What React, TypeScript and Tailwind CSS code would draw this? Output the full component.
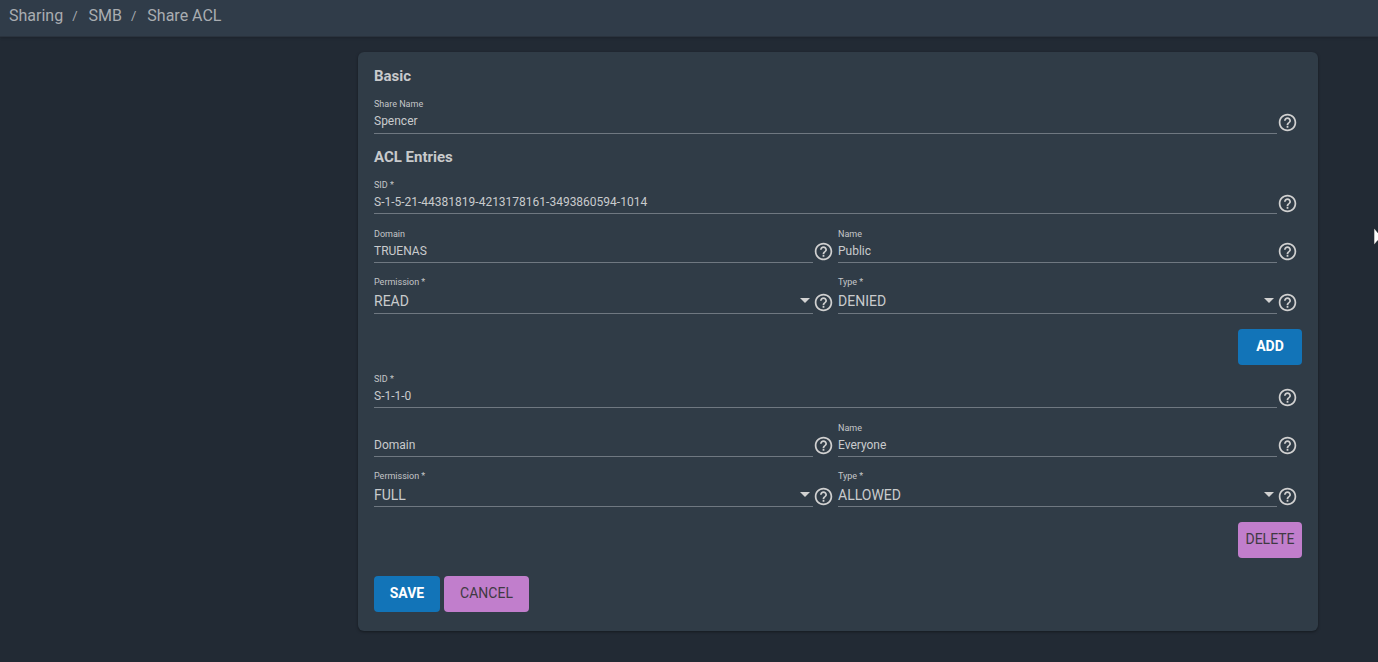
const HELP = "M11 18h2v-2h-2v2zm1-16C6.48 2 2 6.48 2 12s4.48 10 10 10 10-4.48 10-10S17.52 2 12 2zm0 18c-4.41 0-8-3.59-8-8s3.59-8 8-8 8 3.59 8 8-3.59 8-8 8zm0-14c-2.21 0-4 1.79-4 4h2c0-1.1.9-2 2-2s2 .9 2 2c0 2-3 1.75-3 5h2c0-2.25 3-2.5 3-5 0-2.21-1.79-4-4-4z";

function Help({ low }: { low?: boolean }) {
  return (
    <svg viewBox="0 0 24 24" className={`w-[21px] h-[21px] shrink-0 fill-[#d0d0d0] ${low ? "mb-0" : "mb-[1px]"}`}>
      <path d={HELP} />
    </svg>
  );
}

type FieldProps = { label?: string; value: string; select?: boolean; short?: boolean; tight?: boolean; low?: boolean };

function Field({ label, value, select, short, tight, low }: FieldProps) {
  const box = select ? (short ? "h-[38px] pt-[1px]" : "h-[39px] pt-[1px]") : tight ? "h-[36px]" : "h-[36px] pt-[1px]";
  return (
    <div className="flex-1 min-w-0 flex items-end">
      <div className={`flex-1 min-w-0 border-b border-[#6f7881] flex flex-col ${box}`}>
        <div className="h-[13px] text-[9px] leading-[13px] text-[#c4c6c8]">{label}</div>
        <div className={`flex items-center justify-between text-[#c9cbcd] ${select ? "h-[23px] text-[14px]" : "h-[21px] leading-[21px] text-[12px]"}`}>
          <span className={select ? "leading-[23px] relative top-[1px]" : ""}>{value}</span>
          {select && (
            <svg viewBox="0 0 10 5" className="w-[10px] h-[5px] fill-[#d2d2d2] mr-[3px]">
              <path d="M0 0h10L5 5z" />
            </svg>
          )}
        </div>
      </div>
      <Help low={low} />
    </div>
  );
}

function Row({ children, className }: { children: React.ReactNode; className: string }) {
  return <div className={`flex gap-[4px] pr-[4px] ${className}`}>{children}</div>;
}

function Title({ children, className }: { children: React.ReactNode; className?: string }) {
  return <div className={`h-[20px] leading-[20px] text-[15px] font-bold text-[#c8cacc] ${className ?? ""}`}>{children}</div>;
}

function Blue({ children, className }: { children: React.ReactNode; className: string }) {
  return (
    <button className={`h-[36px] pb-[2px] rounded-[4px] bg-[#1274b8] text-[14px] font-bold text-white ${className}`}>
      {children}
    </button>
  );
}

function Purple({ children, className }: { children: React.ReactNode; className: string }) {
  return (
    <button className={`h-[36px] pb-[2px] rounded-[4px] bg-[#c17ecc] text-[14px] text-[#3f3a42] ${className}`}>
      {children}
    </button>
  );
}

export default function App() {
  return (
    <div className="relative w-[1378px] h-[662px] overflow-hidden bg-[#222a34] font-['Roboto',sans-serif]">
      <header className="h-[37px] bg-[#303c49] border-b border-[#2a333e] flex items-start pl-[9px] pt-[6px] text-[16px] leading-[20px] text-[#a9adb1] shadow-sm">
        <span>Sharing</span>
        <span className="ml-[9px] mr-[11px] text-[13px]">/</span>
        <span>SMB</span>
        <span className="ml-[9px] mr-[11px] text-[13px]">/</span>
        <span>Share ACL</span>
      </header>

      <main className="pt-[15px] pl-[358px]">
        <div className="w-[960px] h-[579px] rounded-[6px] bg-[#303c47] px-[16px] pt-[14px] shadow-[0_1px_3px_rgba(0,0,0,0.4)]">
          <Title>Basic</Title>
          <Row className="mt-[12px]"><Field label="Share Name" value="Spencer" tight /></Row>

          <Title className="mt-[13px]">ACL Entries</Title>
          <Row className="mt-[11px]"><Field label="SID *" value="S-1-5-21-44381819-4213178161-3493860594-1014" low /></Row>
          <Row className="mt-[13px]">
            <Field label="Domain" value="TRUENAS" />
            <Field label="Name" value="Public" />
          </Row>
          <Row className="mt-[12px]">
            <Field label="Permission *" value="READ" select />
            <Field label="Type *" value="DENIED" select />
          </Row>
          <div className="mt-[15px] flex justify-end"><Blue className="w-[64px]">ADD</Blue></div>

          <Row className="mt-[7px]"><Field label="SID *" value="S-1-1-0" low /></Row>
          <Row className="mt-[13px]">
            <Field label="" value="Domain" />
            <Field label="Name" value="Everyone" />
          </Row>
          <Row className="mt-[12px]">
            <Field label="Permission *" value="FULL" select short low />
            <Field label="Type *" value="ALLOWED" select short low />
          </Row>
          <div className="mt-[15px] flex justify-end"><Purple className="w-[64px]">DELETE</Purple></div>

          <div className="mt-[18px] flex gap-[4px]">
            <Blue className="w-[66px]">SAVE</Blue>
            <Purple className="w-[85px]">CANCEL</Purple>
          </div>
        </div>
      </main>

      <svg viewBox="0 0 5 17" className="absolute left-[1374px] top-[228px] w-[5px] h-[17px]">
        <path d="M0 0l5 6v5l-5 6z" fill="#fff" stroke="#000" strokeWidth="0.5" />
      </svg>
    </div>
  );
}
